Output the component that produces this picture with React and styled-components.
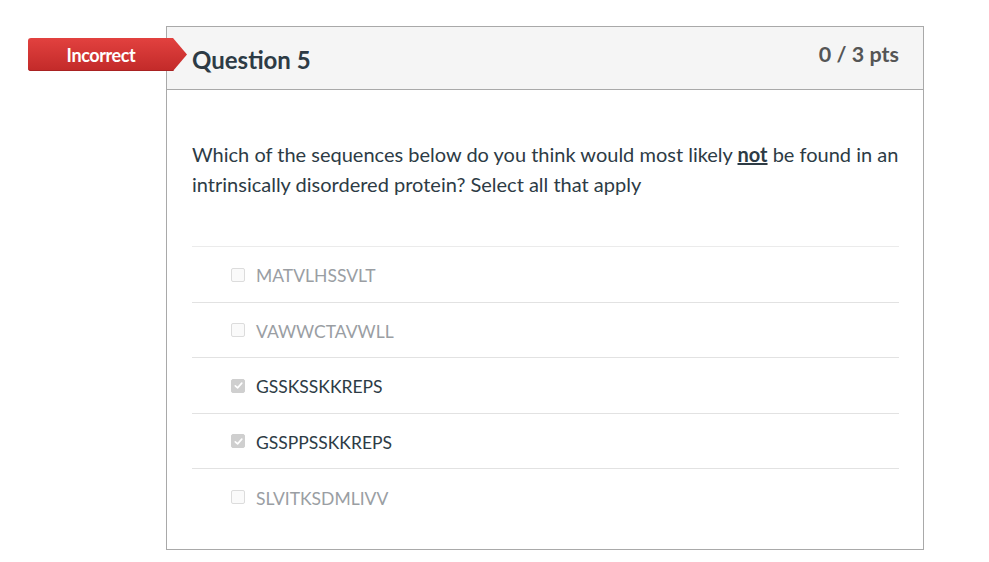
import React from "react";
import styled, { createGlobalStyle } from "styled-components";

const GlobalStyle = createGlobalStyle`
  html, body {
    margin: 0;
    padding: 0;
    background: #ffffff;
  }
  body {
    font-family: Lato, "Noto Sans", sans-serif;
    color: #2d3b45;
  }
`;

const ANSWERS = [
  { text: "MATVLHSSVLT", checked: false },
  { text: "VAWWCTAVWLL", checked: false },
  { text: "GSSKSSKKREPS", checked: true },
  { text: "GSSPPSSKKREPS", checked: true },
  { text: "SLVITKSDMLIVV", checked: false },
];

function App() {
  return (
    <>
      <GlobalStyle />
      <Page>
        <Card>
          <Banner>Incorrect</Banner>
          <CardHeader>
            <Title>Question 5</Title>
            <Points>0 / 3 pts</Points>
          </CardHeader>
          <CardBody>
            <QuestionText>
              Which of the sequences below do you think would most likely{" "}
              <strong>
                <u>not</u>
              </strong>{" "}
              be found in an intrinsically disordered protein? Select all that
              apply
            </QuestionText>
            <AnswerList>
              {ANSWERS.map((a) => (
                <AnswerRow key={a.text}>
                  <Box checked={a.checked}>
                    {a.checked && (
                      <svg width="11" height="11" viewBox="0 0 12 12">
                        <path
                          d="M2.5 6.3 L5 8.6 L9.6 3.4"
                          fill="none"
                          stroke="#fff"
                          strokeWidth="1.8"
                          strokeLinecap="round"
                          strokeLinejoin="round"
                        />
                      </svg>
                    )}
                  </Box>
                  <AnswerText checked={a.checked}>{a.text}</AnswerText>
                </AnswerRow>
              ))}
            </AnswerList>
          </CardBody>
        </Card>
      </Page>
    </>
  );
}
export default App;

const Page = styled.div`
  padding: 26px 0 0 166px;
`;

const Card = styled.div`
  position: relative;
  width: 756px;
  height: 522px;
  border: 1px solid #a9a9a9;
  box-sizing: content-box;
  background: #fff;
`;

const Banner = styled.div`
  position: absolute;
  left: -139px;
  top: 11px;
  width: 146px;
  height: 33px;
  padding-right: 13px;
  box-sizing: content-box;
  display: flex;
  align-items: center;
  justify-content: center;
  color: #fff;
  font-size: 18px;
  font-weight: 700;
  letter-spacing: -0.4px;
  background: linear-gradient(#e2413f, #c22a29);
  clip-path: polygon(0 0, calc(100% - 14px) 0, 100% 50%, calc(100% - 14px) 100%, 0 100%);
  border-radius: 3px 0 0 3px;
  box-shadow: inset 0 -1px 0 #a92222;
`;

const CardHeader = styled.div`
  height: 62px;
  background: #f5f5f5;
  border-bottom: 1px solid #a9a9a9;
  display: flex;
  justify-content: space-between;
  align-items: flex-start;
  padding: 0 24px 0 25px;
`;

const Title = styled.h2`
  margin: 0;
  padding-top: 18px;
  font-size: 24px;
  font-weight: 700;
  line-height: 30px;
  color: #2d3b45;
`;

const Points = styled.div`
  padding-top: 13px;
  font-size: 21.5px;
  font-weight: 700;
  line-height: 28px;
  color: #555;
`;

const CardBody = styled.div`
  padding: 49px 24px 0 25px;
`;

const QuestionText = styled.p`
  margin: 0 0 47px;
  font-size: 20px;
  line-height: 30px;
  color: #2d3b45;

  strong {
    font-weight: 700;
  }
`;

const AnswerList = styled.div`
  border-top: 1px solid #ebebeb;
`;

const AnswerRow = styled.div`
  height: 55.5px;
  box-sizing: border-box;
  display: flex;
  align-items: center;
  padding: 3px 0 0 39px;
  border-bottom: 1px solid #e2e2e2;

  &:last-child {
    border-bottom: none;
  }
`;

const Box = styled.span`
  width: 14px;
  height: 14px;
  box-sizing: border-box;
  border-radius: 2px;
  margin-top: -2px;
  border: 1px solid ${(p) => (p.checked ? "#cfcfcf" : "#dcdcdc")};
  background: ${(p) => (p.checked ? "#cfcfcf" : "#fafafa")};
  display: flex;
  align-items: center;
  justify-content: center;
  margin-right: 11px;
`;

const AnswerText = styled.span`
  font-size: 17.5px;
  color: ${(p) => (p.checked ? "#2d3b45" : "#9a9ea3")};
`;
